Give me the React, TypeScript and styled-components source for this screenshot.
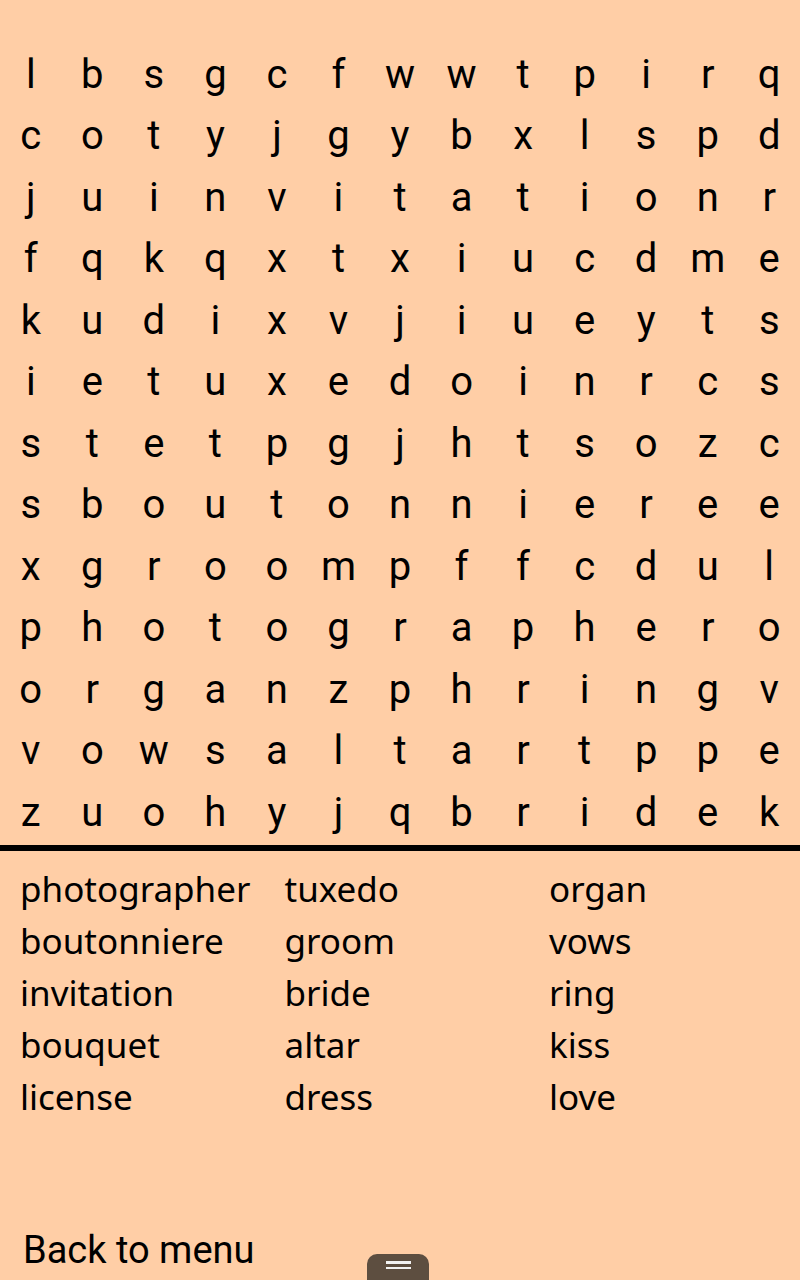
import React from "react";
import styled, { createGlobalStyle } from "styled-components";

const GlobalStyle = createGlobalStyle`
    html, body {
        margin: 0;
        padding: 0;
        background: #ffcea6;
    }
`;

const Page = styled.div`
    position: relative;
    width: 800px;
    height: 1280px;
    background: #ffcea6;
    display: flex;
    flex-direction: column;
    overflow: hidden;
    color: #000;
`;

const Board = styled.div`
    display: grid;
    grid-template-columns: repeat(13, 1fr);
    grid-auto-rows: 61.5px;
    padding-top: 44px;
    font-family: Roboto, "Liberation Sans", sans-serif;
    font-size: 40px;
`;

const Cell = styled.div`
    display: flex;
    align-items: center;
    justify-content: center;
    line-height: 1;
`;

const Divider = styled.div`
    height: 6px;
    background: #000;
    margin-top: 1px;
`;

const Words = styled.div`
    display: grid;
    grid-template-columns: repeat(3, 264.5px);
    grid-auto-rows: 52px;
    padding: 12px 0 0 20px;
    font-family: "Noto Sans", "Open Sans", sans-serif;
    font-size: 35px;
`;

const Word = styled.div`
    line-height: 52px;
    white-space: nowrap;
`;

const BackLink = styled.div`
    margin-top: auto;
    padding: 0 0 8px 23px;
    font-family: Roboto, "Liberation Sans", sans-serif;
    font-size: 38px;
    line-height: 44px;
`;

const MenuKey = styled.div`
    position: absolute;
    left: 367px;
    bottom: 0;
    width: 62px;
    height: 26px;
    background: #5d4e40;
    border-radius: 10px 10px 0 0;
    display: flex;
    flex-direction: column;
    align-items: center;
    padding-top: 7px;
    box-sizing: border-box;
    gap: 3px;
`;

const MenuLine = styled.div`
    width: 25px;
    height: 2.5px;
    background: #f2f2f2;
`;

const rows = [
    "lbsgcfwwtpirq",
    "cotyjgybxlspd",
    "juinvitationr",
    "fqkqxtxiucdme",
    "kudixvjiueyts",
    "ietuxedoinrcs",
    "stetpgjhtsozc",
    "sboutonnieree",
    "xgroompffcdul",
    "photographero",
    "organzphringv",
    "vowsaltartppe",
    "zuohyjqbridek",
];

const words = [
    "photographer", "tuxedo", "organ",
    "boutonniere", "groom", "vows",
    "invitation", "bride", "ring",
    "bouquet", "altar", "kiss",
    "license", "dress", "love",
];

export default function App() {
    return (
        <Page>
            <GlobalStyle />
            <Board>
                {rows.map((row, r) =>
                    row.split("").map((ch, c) => <Cell key={`${r}-${c}`}>{ch}</Cell>)
                )}
            </Board>
            <Divider />
            <Words>
                {words.map((w) => (
                    <Word key={w}>{w}</Word>
                ))}
            </Words>
            <BackLink>Back to menu</BackLink>
            <MenuKey>
                <MenuLine />
                <MenuLine />
            </MenuKey>
        </Page>
    );
}
